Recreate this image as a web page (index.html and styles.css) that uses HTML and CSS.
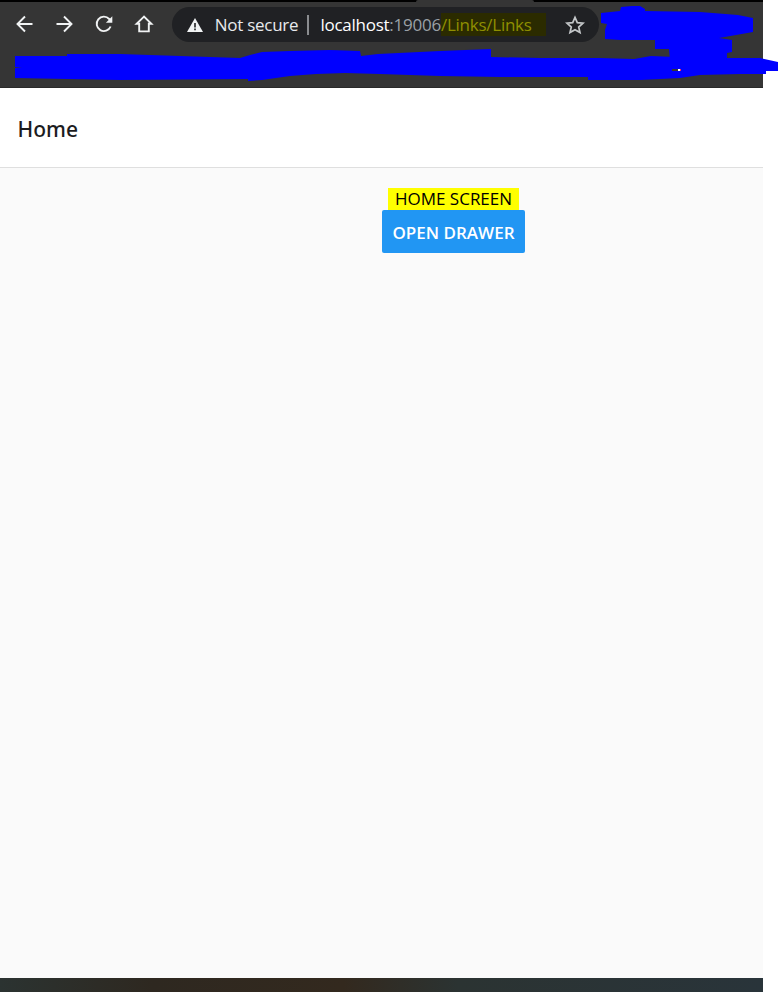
FILE: index.html
```html
<!DOCTYPE html>
<html lang="en">
<head>
<meta charset="utf-8">
<title>Home</title>
<link rel="stylesheet" href="styles.css">
</head>
<body>
<div class="window">
  <header class="browser">
    <div class="tabstrip"><div class="tab"></div></div>
    <div class="toolbar">
      <svg class="nav-icon" viewBox="0 0 20 20"><path d="M17.5 10H3M10 2.5 2.5 10l7.5 7.5"/></svg>
      <svg class="nav-icon" viewBox="0 0 20 20"><path d="M2.5 10H17M10 2.5l7.5 7.5-7.5 7.5"/></svg>
      <svg class="nav-icon" viewBox="0 0 20 20"><path d="M16.6 12.5A7.2 7.2 0 1 1 15.2 5L17.5 7.4"/><path class="solid" d="M18.3 2.3v6.4h-6.4z"/></svg>
      <svg class="nav-icon" viewBox="0 0 20 20"><path d="M10 2.6 2.6 9.8h2.6v7.6h9.6V9.8h2.6z"/></svg>
      <div class="omnibox">
        <svg class="warn" viewBox="0 0 16 14"><path d="M8 0 16 14H0z"/><path class="mark" d="M7.2 5h1.6v4.6H7.2zM7.2 10.6h1.6v1.6H7.2z"/></svg>
        <span class="not-secure">Not secure</span>
        <span class="divider"></span>
        <span class="url"><span class="host">localhost</span><span class="port">:19006</span><span class="path">/Links/Links</span></span>
        <svg class="star" viewBox="0 0 20 20"><path d="M10 2.4l2.3 5.2 5.7.6-4.3 3.8 1.3 5.6-5-2.9-5 2.9 1.3-5.6L2 8.2l5.7-.6z"/></svg>
      </div>
    </div>
    <div class="bookmarks"></div>
    <svg class="scribble" viewBox="0 0 778 88" width="778" height="88">
      <path d="M15 56 67 56 67 54 120 54 180 56 240 58 250 55 262 52 290 51 330 50 360 51 361 56 378 54 440 51 491 49 491 57 540 58 600 58 634 59 651 56 700 58 760 58 778 62 778 71 766 71 766 74 740 74 700 75 680 78 640 80 588 80 588 77 500 77 440 76 380 74 345 73 316 74 290 76 262 80 248 81 248 79 120 80 15 78 15 68 22 68 15 67Z"/>
      <path d="M601 13 620 11 621 7 632 6 640 6 645 9 645 11 700 12 738 15 753 18 753 32 719 38 732 40 732 52 727 53 727 58 670 60 669 49 655 49 655 40 620 40 605 39 605 30 607 24 601 23Z"/>
    </svg>
    <div class="speck"></div>
  </header>
  <main class="app">
    <div class="navbar"><h1 class="title">Home</h1></div>
    <div class="screen">
      <div class="label">HOME SCREEN</div>
      <button class="drawer-btn" type="button">OPEN DRAWER</button>
    </div>
  </main>
</div>
<div class="wallpaper"></div>
</body>
</html>
```
FILE: styles.css
```css
* { box-sizing: border-box; }
html, body { margin: 0; height: 100%; }
body {
  background: #fff;
  height: 992px;
  overflow: hidden;
  display: flex;
  flex-direction: column;
  font-family: "Open Sans", "Noto Sans", sans-serif;
}
.window {
  width: 763px;
  height: 978px;
  display: flex;
  flex-direction: column;
  flex: none;
}
.browser {
  position: relative;
  height: 88px;
  background: #353535;
  flex: none;
  border-bottom: 1px solid #2a2a2a;
}
.tabstrip { height: 2px; background: #000; }
.tab {
  width: 118px;
  height: 2px;
  margin-left: 416px;
  background: #353535;
  border-radius: 2px 2px 0 0;
}
.toolbar {
  height: 44px;
  padding: 5px 0 0 14.5px;
  display: flex;
  align-items: flex-start;
}
.nav-icon {
  width: 20px;
  height: 20px;
  margin: 7px 19.7px 0 0;
  fill: none;
  stroke: #f1f3f4;
  stroke-width: 1.9;
  flex: none;
}
.nav-icon .solid { fill: #f1f3f4; stroke: none; }
.omnibox {
  margin-left: -1.6px;
  width: 427px;
  height: 35px;
  border-radius: 18px;
  background: #202124;
  display: flex;
  align-items: center;
  padding-left: 15px;
  color: #e8eaed;
  font-size: 17px;
  font-family: "Open Sans", sans-serif;
  letter-spacing: -0.25px;
}
.warn { width: 16px; height: 14px; fill: #f1f3f4; flex: none; }
.warn .mark { fill: #202124; }
.not-secure { margin-left: 12px; white-space: nowrap; }
.divider { width: 2px; height: 20px; background: #8a8c8f; margin: 0 11px 0 9px; flex: none; }
.url { white-space: nowrap; }
.host { color: #fff; }
.port { color: #9aa0a6; }
.path { color: #8f8f00; background: #2b2b00; padding-right: 14px; }
.star {
  width: 20px;
  height: 20px;
  margin-left: 19.5px;
  fill: none;
  stroke: #c4c7c9;
  stroke-width: 1.7;
  flex: none;
}
.bookmarks { height: 41px; }
.scribble { position: absolute; left: 0; top: 0; fill: #0000ff; }
.speck {
  position: absolute;
  left: 672px;
  top: 69px;
  width: 9px;
  height: 2px;
  background: linear-gradient(90deg, #353535 0 66%, #fff 66% 88%, #f03060 88%);
}
.app {
  flex: 1;
  background: #fafafa;
  display: flex;
  flex-direction: column;
}
.navbar {
  height: 80px;
  background: #fff;
  border-bottom: 1px solid #dfdfdf;
  padding: 2px 17.5px 0;
  display: flex;
  align-items: center;
}
.title {
  margin: 0;
  font-family: "Noto Sans", sans-serif;
  font-size: 21px;
  font-weight: 500;
  color: #1c1c1e;
}
.screen {
  padding-top: 20px;
  padding-left: 382px;
  width: 525px;
  display: flex;
  flex-direction: column;
  align-items: center;
}
.label {
  background: #ffff00;
  color: #000;
  font-size: 17px;
  line-height: 22px;
  padding: 0 6.5px;
  white-space: nowrap;
}
.drawer-btn {
  width: 143px;
  height: 43px;
  border: 0;
  border-radius: 2px;
  background: #2196f3;
  color: #fff;
  font-family: inherit;
  font-size: 17px;
  font-weight: 600;
  padding: 1px 0 0;
  white-space: nowrap;
}
.wallpaper {
  flex: 1;
  background: linear-gradient(90deg, #2b3331 0%, #2e2820 20%, #33291e 45%, #2b3332 60%, #29343a 100%);
  width: 763px;
}
```
